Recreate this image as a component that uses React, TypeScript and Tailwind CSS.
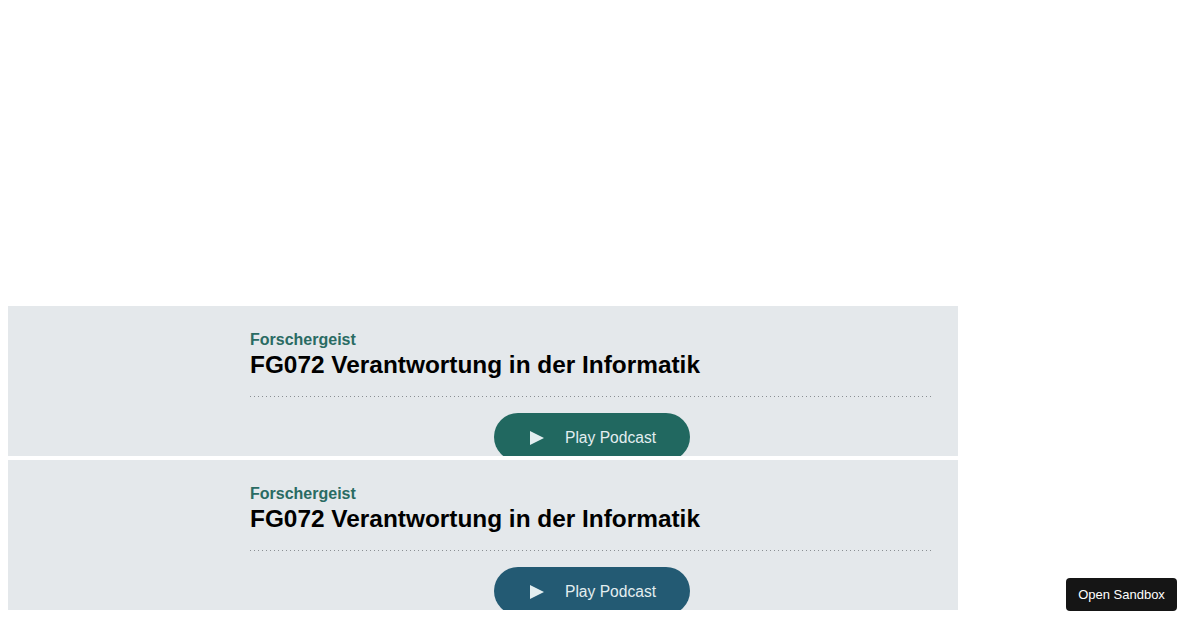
const episodes = [
  { show: "Forschergeist", title: "FG072 Verantwortung in der Informatik", color: "bg-[#216860]" },
  { show: "Forschergeist", title: "FG072 Verantwortung in der Informatik", color: "bg-[#235a73]" },
];

function PlayerCard({ show, title, color }: { show: string; title: string; color: string }) {
  return (
    <div className="w-[950px] h-[150px] overflow-hidden bg-[#e4e8eb]">
      <div className="ml-[242px] mr-[26px] pt-[25px]">
        <p className="text-[16px] leading-[18px] font-bold text-[#2a6b63]">{show}</p>
        <h1 className="mt-[2px] text-[24.4px] leading-[28px] font-bold text-black">{title}</h1>
        <div className="mt-[17px] h-px bg-[linear-gradient(to_right,#8a8f93_1px,transparent_1px)] bg-[length:4px_1px]"></div>
        <div className="mt-[16px] flex justify-center">
          <button
            className={`${color} ml-[2px] w-[196px] h-[48px] rounded-full flex items-center text-[#e3eef0] text-[15.6px] pt-[2px]`}
          >
            <svg width="14" height="14" viewBox="0 0 14 14" className="ml-[36px]">
              <polygon points="0,0 14,7 0,14" fill="#e3eef0" />
            </svg>
            <span className="ml-[21px]">Play Podcast</span>
          </button>
        </div>
      </div>
    </div>
  );
}

export default function App() {
  return (
    <div className="relative w-[1200px] h-[630px] bg-white font-['Liberation_Sans',Arial,sans-serif]">
      <div className="pt-[306px] pl-[8px] flex flex-col gap-[4px]">
        {episodes.map((ep, index) => (
          <PlayerCard key={index} {...ep} />
        ))}
      </div>
      <button className="absolute left-[1066px] top-[578px] w-[111px] h-[33px] rounded-[4px] bg-[#151515] text-white text-[13px]">
        Open Sandbox
      </button>
    </div>
  );
}
